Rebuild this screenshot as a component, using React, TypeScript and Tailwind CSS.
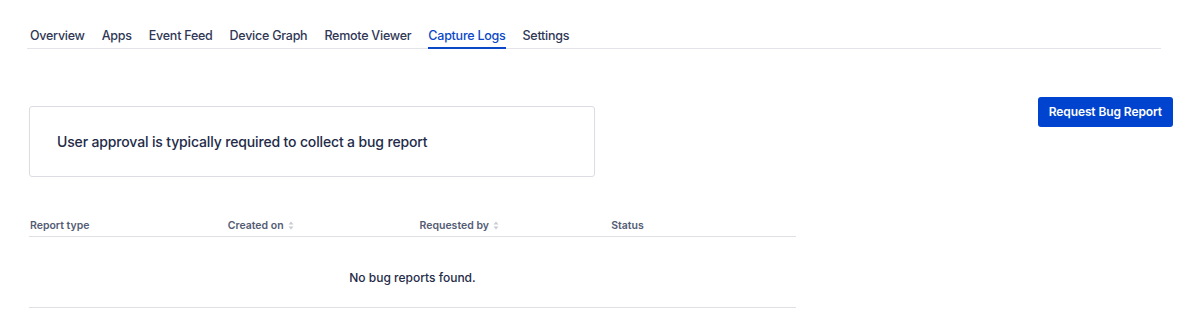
const TABS = ['Overview', 'Apps', 'Event Feed', 'Device Graph', 'Remote Viewer', 'Capture Logs', 'Settings']

function SortIcon() {
  return (
    <svg width="6" height="9" viewBox="0 0 6 9" className="ml-1 inline-block">
      <path d="M3 0.5 L5.5 3.5 H0.5 Z" fill="#c9ccd4" />
      <path d="M3 8.5 L5.5 5.5 H0.5 Z" fill="#c9ccd4" />
    </svg>
  )
}

const COLUMNS: { label: string; sortable: boolean }[] = [
  { label: 'Report type', sortable: false },
  { label: 'Created on', sortable: true },
  { label: 'Requested by', sortable: true },
  { label: 'Status', sortable: false },
]

export default function App() {
  return (
    <div className="min-h-screen bg-white text-[#232b48]" style={{ fontFamily: 'Inter, "Noto Sans", sans-serif' }}>
      <div className="pl-[27px] pr-[32px] pt-[27px]">
        {/* Tabs */}
        <nav className="flex border-b border-[#e3e4e9]">
          <div className="flex gap-[17px] pl-[3px]">
            {TABS.map((t) => {
              const active = t === 'Capture Logs'
              return (
                <div
                  key={t}
                  className={`-mb-px border-b-2 pb-[2px] text-[12.5px] font-medium leading-[18px] tracking-[-0.25px] ${
                    active ? 'border-[#0a48c8] text-[#0a48c8]' : 'border-transparent text-[#2f3755]'
                  }`}
                >
                  {t}
                </div>
              )
            })}
          </div>
        </nav>
      </div>

      {/* Body */}
      <div className="flex items-start justify-between pl-[29px] pr-[20px] pt-[48px]">
        <div className="mt-[9px] flex h-[71px] w-[566px] items-center rounded-[3px] border border-[#dcdde3] pl-[27px]">
          <p className="text-[14px] font-medium tracking-[-0.15px] text-[#232b48]">
            User approval is typically required to collect a bug report
          </p>
        </div>
        <button className="h-[30px] rounded-[3px] bg-[#0043ce] px-[11px] text-[12px] font-semibold tracking-[-0.1px] text-white">
          Request Bug Report
        </button>
      </div>

      {/* Table */}
      <div className="ml-[29px] mt-[41px] w-[767px]">
        <div className="grid grid-cols-4 border-b border-[#dfe0e4] pb-[2px]">
          {COLUMNS.map((c, i) => (
            <div
              key={c.label}
              className={`flex items-center text-[10.5px] font-semibold text-[#545c74] ${i === 0 ? 'pl-[1px]' : 'pl-[7px]'}`}
            >
              {c.label}
              {c.sortable && <SortIcon />}
            </div>
          ))}
        </div>
        <div className="flex h-[71px] items-center justify-center border-b border-[#dfe0e4] pt-[13px]">
          <span className="text-[12px] font-medium text-[#232b48]">No bug reports found.</span>
        </div>
      </div>
    </div>
  )
}
